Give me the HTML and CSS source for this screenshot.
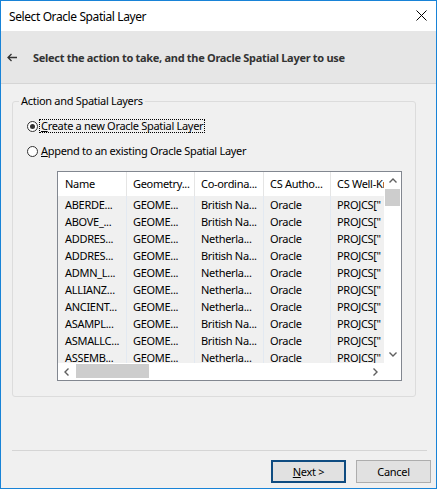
FILE: index.html
```html
<!DOCTYPE html>
<html>
<head>
<meta charset="utf-8">
<link rel="stylesheet" href="styles.css">
</head>
<body>
<div class="window">
  <div class="titlebar">
    <span class="title">Select Oracle Spatial Layer</span>
    <svg class="close" width="11" height="11" viewBox="0 0 11 11"><path d="M0.5 0.5 L10.5 10.5 M10.5 0.5 L0.5 10.5" stroke="#000" stroke-width="1" fill="none"/></svg>
  </div>
  <div class="header">
    <svg class="back" width="10" height="9" viewBox="0 0 10 9"><path d="M1 4.5 H10 M4.5 1 L1 4.5 L4.5 8" stroke="#333" stroke-width="1.3" fill="none"/></svg>
    <span class="header-text">Select the action to take, and the Oracle Spatial Layer to use</span>
  </div>
  <div class="content">
    <fieldset class="group">
      <legend class="legend">Action and Spatial Layers</legend>
      <div class="group-body">
        <div class="radio-row">
          <span class="radio checked"></span>
          <span class="radio-label focused"><u>C</u>reate a new Oracle Spatial Layer</span>
        </div>
        <div class="radio-row">
          <span class="radio"></span>
          <span class="radio-label"><u>A</u>ppend to an existing Oracle Spatial Layer</span>
        </div>
        <div class="listview">
          <div class="lv-top">
            <div class="lv-main">
              <div class="lv-row lv-head">
                <div class="cell">Name</div><div class="cell">Geometry...</div><div class="cell">Co-ordina...</div><div class="cell">CS Autho...</div><div class="cell">CS Well-Known</div>
              </div>
              <div class="lv-row"><div class="cell">ABERDE...</div><div class="cell">GEOME...</div><div class="cell">British Na...</div><div class="cell">Oracle</div><div class="cell">PROJCS["</div></div>
              <div class="lv-row"><div class="cell">ABOVE_...</div><div class="cell">GEOME...</div><div class="cell">British Na...</div><div class="cell">Oracle</div><div class="cell">PROJCS["</div></div>
              <div class="lv-row"><div class="cell">ADDRES...</div><div class="cell">GEOME...</div><div class="cell">Netherla...</div><div class="cell">Oracle</div><div class="cell">PROJCS["</div></div>
              <div class="lv-row"><div class="cell">ADDRES...</div><div class="cell">GEOME...</div><div class="cell">British Na...</div><div class="cell">Oracle</div><div class="cell">PROJCS["</div></div>
              <div class="lv-row"><div class="cell">ADMN_L...</div><div class="cell">GEOME...</div><div class="cell">Netherla...</div><div class="cell">Oracle</div><div class="cell">PROJCS["</div></div>
              <div class="lv-row"><div class="cell">ALLIANZ...</div><div class="cell">GEOME...</div><div class="cell">Netherla...</div><div class="cell">Oracle</div><div class="cell">PROJCS["</div></div>
              <div class="lv-row"><div class="cell">ANCIENT...</div><div class="cell">GEOME...</div><div class="cell">Netherla...</div><div class="cell">Oracle</div><div class="cell">PROJCS["</div></div>
              <div class="lv-row"><div class="cell">ASAMPL...</div><div class="cell">GEOME...</div><div class="cell">British Na...</div><div class="cell">Oracle</div><div class="cell">PROJCS["</div></div>
              <div class="lv-row"><div class="cell">ASMALLC...</div><div class="cell">GEOME...</div><div class="cell">British Na...</div><div class="cell">Oracle</div><div class="cell">PROJCS["</div></div>
              <div class="lv-row"><div class="cell">ASSEMB...</div><div class="cell">GEOME...</div><div class="cell">Netherla...</div><div class="cell">Oracle</div><div class="cell">PROJCS["</div></div>
            </div>
            <div class="vscroll">
              <div class="sb-btn"><svg width="8" height="5" viewBox="0 0 8 5"><path d="M0.5 4.5 L4 1 L7.5 4.5" stroke="#606060" stroke-width="1.4" fill="none"/></svg></div>
              <div class="vthumb"></div>
              <div class="sb-fill"></div>
              <div class="sb-btn"><svg width="8" height="5" viewBox="0 0 8 5"><path d="M0.5 0.5 L4 4 L7.5 0.5" stroke="#606060" stroke-width="1.4" fill="none"/></svg></div>
            </div>
          </div>
          <div class="lv-bottom">
            <div class="hscroll">
              <div class="sb-btn"><svg width="5" height="8" viewBox="0 0 5 8"><path d="M4.5 0.5 L1 4 L4.5 7.5" stroke="#606060" stroke-width="1.4" fill="none"/></svg></div>
              <div class="hthumb"></div>
              <div class="sb-fill"></div>
              <div class="sb-btn"><svg width="5" height="8" viewBox="0 0 5 8"><path d="M0.5 0.5 L4 4 L0.5 7.5" stroke="#606060" stroke-width="1.4" fill="none"/></svg></div>
            </div>
            <div class="corner"></div>
          </div>
        </div>
      </div>
    </fieldset>
  </div>
  <div class="footer">
    <div class="separator"></div>
    <div class="buttons">
      <button class="btn default"><u>N</u>ext &gt;</button>
      <button class="btn">Cancel</button>
    </div>
  </div>
</div>
</body>
</html>
```
FILE: styles.css
```css
* { box-sizing: border-box; }
html, body { margin: 0; padding: 0; }
body {
  font-family: "Segoe UI", "Noto Sans", sans-serif;
  font-size: 11px;
  letter-spacing: -0.3px;
  color: #000;
  background: #fff;
}
.window {
  width: 437px;
  height: 489px;
  border: 1px solid #1883d7;
  background: #f0f0f0;
  display: flex;
  flex-direction: column;
}
.titlebar {
  height: 30px;
  background: #fff;
  display: flex;
  align-items: center;
  justify-content: space-between;
  padding: 0 9px 0 8px;
  flex-shrink: 0;
}
.title { font-size: 12px; letter-spacing: -0.4px; }
.close { display: block; margin-top: -2px; }
.header {
  height: 53px;
  flex-shrink: 0;
  background: #e6e6e6;
  border-bottom: 1px solid #d5d5d5;
  display: flex;
  align-items: center;
  padding-left: 6px;
}
.back { display: block; margin-right: 16px; }
.header-text { font-weight: bold; color: #333; }
.content {
  flex: 1;
  padding: 9px 20px 0 11px;
}
.group {
  margin: 0;
  padding: 0;
  border: 1px solid #dcdcdc;
  border-radius: 3px;
  min-width: 0;
}
.legend {
  margin-left: 6px;
  padding: 0 2px;
  line-height: 16px;
  color: #000;
}
.group-body {
  padding: 9px 13px 15px 14px;
  display: flex;
  flex-direction: column;
}
.radio-row {
  height: 16px;
  display: flex;
  align-items: center;
  margin-bottom: 9px;
}
.radio-row + .radio-row { margin-bottom: 12px; }
.radio {
  width: 11px;
  height: 11px;
  border: 1px solid #333;
  border-radius: 50%;
  background: #fff;
  display: flex;
  align-items: center;
  justify-content: center;
  margin-right: 1px;
  flex-shrink: 0;
}
.radio.checked::after {
  content: "";
  width: 5px;
  height: 5px;
  border-radius: 50%;
  background: #333;
}
.radio-label {
  padding: 0 1px;
  line-height: 12px;
  border: 1px dotted transparent;
}
.radio-label.focused { border-color: #000; }
.listview {
  margin-left: 30px;
  width: 345px;
  height: 210px;
  border: 1px solid #828790;
  display: flex;
  flex-direction: column;
}
.lv-top { display: flex; height: 191px; }
.lv-main {
  width: 326px;
  overflow: hidden;
  background: #f0f0f0;
}
.lv-row {
  display: grid;
  grid-template-columns: 69px 68px 69px 67px 53px;
  height: 17px;
  line-height: 17px;
}
.lv-head {
  height: 24px;
  line-height: 24px;
  background: #fff;
}
.cell {
  padding-left: 6px;
  white-space: nowrap;
  overflow: hidden;
  border-right: 1px solid #e3e9f1;
}
.lv-head .cell { border-right-color: #e5e5e5; }
.lv-row .cell:first-child { padding-left: 7px; }
.lv-row .cell:last-child { border-right: none; }
.vscroll {
  width: 17px;
  background: #fff;
  display: flex;
  flex-direction: column;
}
.sb-btn {
  width: 17px;
  height: 17px;
  display: flex;
  align-items: center;
  justify-content: center;
  flex-shrink: 0;
}
.sb-btn svg { display: block; }
.sb-fill { flex: 1; }
.vthumb {
  height: 17px;
  margin: 0 1px;
  background: #cdcdcd;
}
.lv-bottom { display: flex; height: 17px; }
.hscroll {
  width: 326px;
  background: #fff;
  display: flex;
}
.hthumb {
  width: 73px;
  margin: 1px 0 2px 1px;
  background: #cdcdcd;
}
.corner { width: 17px; background: #fff; }
.footer {
  flex-shrink: 0;
  padding: 0 9px 5px 11px;
}
.separator {
  height: 1px;
  background: #d5d5d5;
}
.buttons {
  display: flex;
  justify-content: flex-end;
  gap: 10px;
  margin-top: 9px;
  margin-right: -4px;
}
.btn {
  width: 75px;
  height: 23px;
  font-family: inherit;
  font-size: 11px;
  letter-spacing: -0.3px;
  color: #000;
  background: #e1e1e1;
  border: 1px solid #adadad;
  padding: 0;
  margin: 0;
}
.btn.default {
  border: 2px solid #0f4c81;
}
```
